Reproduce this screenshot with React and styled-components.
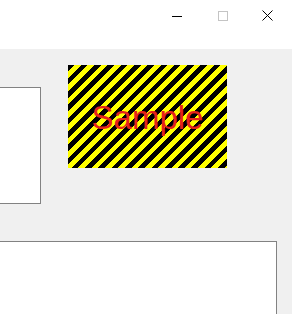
import React from 'react'
import styled, {createGlobalStyle} from 'styled-components'

const GlobalStyle = createGlobalStyle`
  html, body {
    margin: 0;
    padding: 0;
    width: 292px;
    height: 314px;
    overflow: hidden;
    background: #f0f0f0;
    font-family: "Liberation Sans", Arial, sans-serif;
  }
`

const Window = styled.div`
  width: 292px;
  height: 314px;
  display: flex;
  flex-direction: column;
  overflow: hidden;
`

const TitleBar = styled.div`
  height: 49px;
  flex-shrink: 0;
  background: #ffffff;
  display: flex;
  justify-content: flex-end;
  align-items: flex-start;
`

const CaptionButton = styled.div`
  width: 46px;
  height: 31px;
  display: flex;
  align-items: center;
  justify-content: center;
  padding-right: ${p => p.shift || 0}px;
  box-sizing: border-box;
  svg {
    display: block;
  }
`

const Content = styled.div`
  flex: 1;
  background: #f0f0f0;
  padding-top: 16px;
  display: flex;
  flex-direction: column;
`

const TopRow = styled.div`
  display: flex;
  align-items: flex-start;
  gap: 27px;
`

const Panel = styled.div`
  box-sizing: border-box;
  background: #ffffff;
  border: 1px solid #828282;
  margin-left: -20px;
  width: ${p => p.w}px;
  height: ${p => p.h}px;
  margin-top: ${p => p.top || 0}px;
  flex-shrink: 0;
`

const Picture = styled.div`
  width: 159px;
  height: 103px;
  flex-shrink: 0;
  display: flex;
  align-items: center;
  justify-content: center;
  background: repeating-linear-gradient(
    135deg,
    #000000 0px,
    #000000 4.7px,
    #ffff00 4.7px,
    #ffff00 9.4px
  );
`

const SampleText = styled.span`
  color: #e5231b;
  font-family: "Liberation Sans", Arial, sans-serif;
  font-size: 33px;
  line-height: 1;
  margin-top: 2px;
`

const App = () => (
    <>
        <GlobalStyle/>
        <Window>
            <TitleBar>
                <CaptionButton>
                    <svg width="10" height="10" viewBox="0 0 10 10">
                        <line x1="0" y1="5.5" x2="10" y2="5.5" stroke="#000" strokeWidth="1"/>
                    </svg>
                </CaptionButton>
                <CaptionButton>
                    <svg width="10" height="10" viewBox="0 0 10 10">
                        <rect x="0.5" y="0.5" width="9" height="9" fill="none" stroke="#c4c4c4" strokeWidth="1"/>
                    </svg>
                </CaptionButton>
                <CaptionButton shift={3}>
                    <svg width="11" height="11" viewBox="0 0 11 11">
                        <path d="M0.5 0.5 L10.5 10.5 M10.5 0.5 L0.5 10.5" stroke="#000" strokeWidth="1"/>
                    </svg>
                </CaptionButton>
            </TitleBar>
            <Content>
                <TopRow>
                    <Panel w={61} h={117} top={22}/>
                    <Picture>
                        <SampleText>Sample</SampleText>
                    </Picture>
                </TopRow>
                <Panel w={297} h={100} top={37}/>
            </Content>
        </Window>
    </>
)

export default App
